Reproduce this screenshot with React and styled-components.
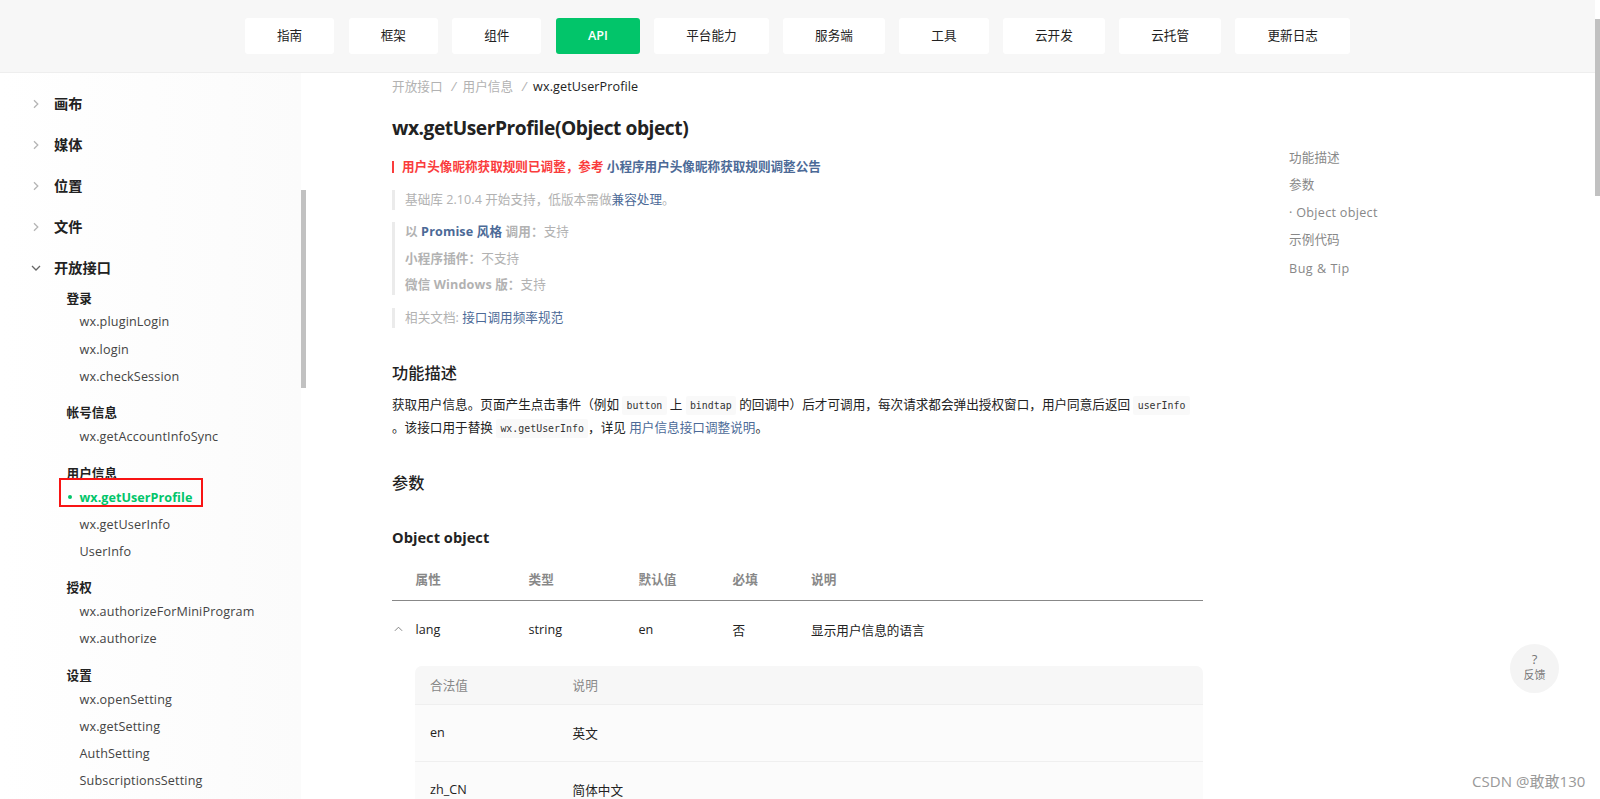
import React from "react";
import styled, { createGlobalStyle, css } from "styled-components";

const tabs = [
  "指南",
  "框架",
  "组件",
  "API",
  "平台能力",
  "服务端",
  "工具",
  "云开发",
  "云托管",
  "更新日志",
];

const closedSections = ["画布", "媒体", "位置", "文件"];

const groups = [
  { title: "登录", items: ["wx.pluginLogin", "wx.login", "wx.checkSession"] },
  { title: "帐号信息", items: ["wx.getAccountInfoSync"] },
  {
    title: "用户信息",
    items: ["wx.getUserProfile", "wx.getUserInfo", "UserInfo"],
  },
  { title: "授权", items: ["wx.authorizeForMiniProgram", "wx.authorize"] },
  {
    title: "设置",
    items: [
      "wx.openSetting",
      "wx.getSetting",
      "AuthSetting",
      "SubscriptionsSetting",
    ],
  },
];

const toc = ["功能描述", "参数", "· Object object", "示例代码", "Bug & Tip"];

const Chevron = ({ open }) => (
  <Arrow viewBox="0 0 10 10" $open={open}>
    <path d={open ? "M1 3 L5 7 L9 3" : "M3 1.2 L6.8 5 L3 8.8"} />
  </Arrow>
);

const Header = () => (
  <Bar>
    {tabs.map((tab) => (
      <Tab key={tab} $active={tab === "API"}>
        {tab}
      </Tab>
    ))}
  </Bar>
);

const Sidebar = () => (
  <Side>
    <Menu>
      {closedSections.map((name) => (
        <Section key={name}>
          <Chevron />
          <span>{name}</span>
        </Section>
      ))}
      <Section>
        <Chevron open />
        <span>开放接口</span>
      </Section>
      {groups.map(({ title, items }) => (
        <Group key={title}>
          <GroupTitle>{title}</GroupTitle>
          {items.map((item) => (
            <Item key={item} $active={item === "wx.getUserProfile"}>
              {item}
              {item === "wx.getUserProfile" && <Marker />}
            </Item>
          ))}
        </Group>
      ))}
    </Menu>
    <SideTrack>
      <SideThumb />
    </SideTrack>
  </Side>
);

const Params = () => (
  <Table>
    <TableRow $head>
      <span />
      <span>属性</span>
      <span>类型</span>
      <span>默认值</span>
      <span>必填</span>
      <span>说明</span>
    </TableRow>
    <TableRow>
      <Toggle viewBox="0 0 10 8">
        <path d="M1 6 L5 2 L9 6" />
      </Toggle>
      <span>lang</span>
      <span>string</span>
      <span>en</span>
      <span>否</span>
      <span>显示用户信息的语言</span>
    </TableRow>
    <SubTable>
      <SubRow $head>
        <span>合法值</span>
        <span>说明</span>
      </SubRow>
      <SubRow>
        <span>en</span>
        <span>英文</span>
      </SubRow>
      <SubRow>
        <span>zh_CN</span>
        <span>简体中文</span>
      </SubRow>
    </SubTable>
  </Table>
);

export default function App() {
  return (
    <Page>
      <GlobalStyle />
      <Layout>
        <Header />
        <Body>
          <Sidebar />
          <Content>
            <Crumbs>
              <span>开放接口</span>
              <i>/</i>
              <span>用户信息</span>
              <i>/</i>
              <b>wx.getUserProfile</b>
            </Crumbs>
            <Title>wx.getUserProfile(Object object)</Title>
            <Alert>
              用户头像昵称获取规则已调整，参考{" "}
              <Link>小程序用户头像昵称获取规则调整公告</Link>
            </Alert>
            <Quote>
              <p>
                基础库 2.10.4 开始支持，低版本需做<Link>兼容处理</Link>。
              </p>
            </Quote>
            <Quote $list>
              <p>
                <strong>
                  以 <Link>Promise 风格</Link> 调用：
                </strong>
                支持
              </p>
              <p>
                <strong>小程序插件：</strong>不支持
              </p>
              <p>
                <strong>微信 Windows 版：</strong>支持
              </p>
            </Quote>
            <Quote>
              <p>
                相关文档: <Link>接口调用频率规范</Link>
              </p>
            </Quote>
            <Heading>功能描述</Heading>
            <Text>
              获取用户信息。页面产生点击事件（例如 <Code>button</Code> 上{" "}
              <Code>bindtap</Code>{" "}
              的回调中）后才可调用，每次请求都会弹出授权窗口，用户同意后返回{" "}
              <Code>userInfo</Code>
              <br />
              。该接口用于替换 <Code>wx.getUserInfo</Code>，详见{" "}
              <Link>用户信息接口调整说明</Link>。
            </Text>
            <Heading $params>参数</Heading>
            <SubHeading>Object object</SubHeading>
            <Params />
          </Content>
          <Toc>
            {toc.map((name) => (
              <li key={name}>{name}</li>
            ))}
          </Toc>
        </Body>
      </Layout>
      <PageTrack>
        <PageThumb />
      </PageTrack>
      <Feedback>
        <b>?</b>
        <span>反馈</span>
      </Feedback>
      <Watermark>CSDN @敢敢130</Watermark>
    </Page>
  );
}

const GlobalStyle = createGlobalStyle`
  * {
    box-sizing: border-box;
    margin: 0;
    padding: 0;
  }
  body {
    background: #fff;
    color: #222;
    font-family: "Open Sans", "Noto Sans CJK SC", sans-serif;
    font-size: 12.6px;
    letter-spacing: 0.04px;
    overflow: hidden;
  }
`;

const Page = styled.div`
  position: relative;
  display: flex;
  width: 1600px;
  height: 799px;
  overflow: hidden;
`;

const Layout = styled.div`
  flex: 1;
  display: flex;
  flex-direction: column;
  min-width: 0;
`;

const Bar = styled.header`
  flex: none;
  height: 73px;
  padding: 18px 0 0 245px;
  display: flex;
  gap: 14.4px;
  background: #f7f7f7;
  border-bottom: 1px solid #eee;
`;

const Tab = styled.a`
  height: 36px;
  padding: 0 32px;
  line-height: 36px;
  border-radius: 3px;
  background: #fff;
  white-space: nowrap;
  letter-spacing: 0.02px;
  ${(props) =>
    props.$active &&
    css`
      background: #02c56a;
      color: #fff;
      font-weight: 600;
    `}
`;

const Body = styled.div`
  flex: 1;
  display: flex;
  min-height: 0;
`;

const Side = styled.aside`
  flex: none;
  width: 306px;
  display: flex;
`;

const Menu = styled.nav`
  width: 301px;
  padding-top: 10.5px;
  overflow: hidden;
  background: linear-gradient(to right, #fff, #fbfbfb);
`;

const SideTrack = styled.div`
  width: 5px;
  padding-top: 117px;
`;

const SideThumb = styled.div`
  height: 198px;
  background: #c1c1c1;
`;

const Section = styled.div`
  height: 41px;
  padding-left: 31px;
  display: flex;
  align-items: center;
  gap: 13px;
  font-size: 14.2px;
  font-weight: 600;
  span {
    padding-bottom: 2px;
  }
`;

const Arrow = styled.svg`
  width: 10px;
  height: 10px;
  fill: none;
  stroke: ${(props) => (props.$open ? "#666" : "#b5b5b5")};
  stroke-width: 1.3;
`;

const Group = styled.div`
  margin-bottom: 13.3px;
`;

const GroupTitle = styled.div`
  height: 19.9px;
  padding-left: 66.5px;
  line-height: 19px;
  font-weight: 600;
`;

const Item = styled.div`
  position: relative;
  height: 27.2px;
  padding-left: 79.5px;
  line-height: 28.6px;
  color: #444;
  letter-spacing: 0.15px;
  ${(props) =>
    props.$active &&
    css`
      color: #02c56a;
      font-weight: 700;
      letter-spacing: 0.05px;
      &::before {
        content: "";
        position: absolute;
        left: 68px;
        top: 11.5px;
        width: 4px;
        height: 4px;
        border-radius: 50%;
        background: #02c56a;
      }
    `}
`;

const Marker = styled.div`
  position: absolute;
  left: 58.6px;
  top: -5.5px;
  width: 144px;
  height: 29px;
  border: 2px solid #f81414;
`;

const Content = styled.main`
  width: 811px;
  margin-left: 86px;
  flex: none;
`;

const Crumbs = styled.div`
  height: 27px;
  line-height: 27px;
  display: flex;
  color: #b2b2b2;
  i {
    width: 20px;
    padding-left: 9px;
    font-size: 13px;
  }
  b {
    color: #222;
    font-weight: 400;
    letter-spacing: 0.1px;
  }
`;

const Title = styled.h1`
  height: 55px;
  line-height: 55px;
  font-size: 19.2px;
  font-weight: 700;
  letter-spacing: -0.46px;
`;

const Link = styled.a`
  color: #4c6a97;
`;

const Alert = styled.p`
  height: 12px;
  margin: 6px 0 17px;
  padding-left: 8px;
  border-left: 2px solid #fa3c3c;
  line-height: 12px;
  color: #fa3c3c;
  font-weight: 600;
  letter-spacing: 0;
  white-space: nowrap;
`;

const Quote = styled.blockquote`
  margin-bottom: 12px;
  padding-left: 10px;
  border-left: 3px solid #ebebeb;
  color: #b2b2b2;
  line-height: 20px;
  ${(props) =>
    props.$list &&
    css`
      margin-bottom: 13px;
      p + p {
        margin-top: 6.5px;
      }
    `}
  strong {
    font-weight: 700;
    letter-spacing: 0.12px;
  }
`;

const Heading = styled.h2`
  margin-top: ${(props) => (props.$params ? "31px" : "33px")};
  height: 24px;
  line-height: 24px;
  font-size: 16.2px;
  font-weight: 500;
`;

const Text = styled.p`
  margin-top: 9px;
  line-height: 22px;
  letter-spacing: 0.02px;
  white-space: nowrap;
`;

const Code = styled.code`
  padding: 4px 4.2px;
  border-radius: 2px;
  background: #f9f9f9;
  color: #333;
  font-family: "DejaVu Sans Mono", monospace;
  font-size: 9.9px;
`;

const SubHeading = styled.h3`
  margin-top: 32px;
  height: 20px;
  line-height: 20px;
  font-size: 14.6px;
  font-weight: 700;
`;

const Table = styled.div`
  margin-top: 11px;
`;

const TableRow = styled.div`
  display: grid;
  grid-template-columns: 23.5px 113px 110px 94px 78.5px 1fr;
  align-items: center;
  height: ${(props) => (props.$head ? "43px" : "56px")};
  ${(props) =>
    props.$head &&
    css`
      padding-bottom: 2px;
      color: #888;
      font-weight: 600;
      border-bottom: 1px solid #888;
    `}
`;

const Toggle = styled.svg`
  width: 9px;
  height: 8px;
  margin-left: 2px;
  fill: none;
  stroke: #777;
`;

const SubTable = styled.div`
  margin: 9px 0 0 23px;
  border-radius: 7px 7px 0 0;
  overflow: hidden;
  background: #fbfbfb;
`;

const SubRow = styled.div`
  display: grid;
  grid-template-columns: 142.5px 1fr;
  align-items: center;
  height: ${(props) => (props.$head ? "39px" : "57px")};
  padding: 0 0 1px 15px;
  border-bottom: 1px solid #efefef;
  ${(props) =>
    props.$head &&
    css`
      background: #f7f7f7;
      color: #888;
    `}
`;

const Toc = styled.ul`
  margin: 70.5px 0 0 86px;
  list-style: none;
  color: #888;
  letter-spacing: 0.1px;
  li {
    height: 27.5px;
    line-height: 28px;
  }
  li:nth-child(3),
  li:last-child {
    letter-spacing: 0.3px;
  }
  li:last-child {
    margin-top: 1px;
    letter-spacing: 0.5px;
  }
`;

const PageTrack = styled.div`
  flex: none;
  width: 5px;
  padding-top: 19px;
  background: #fff;
`;

const PageThumb = styled.div`
  height: 177px;
  background: #c1c1c1;
`;

const Feedback = styled.div`
  position: absolute;
  left: 1510px;
  top: 644px;
  width: 49px;
  height: 49px;
  padding-top: 8px;
  display: flex;
  flex-direction: column;
  align-items: center;
  border-radius: 50%;
  background: #f4f4f4;
  color: #777;
  font-size: 11px;
  line-height: 15px;
  b {
    font-size: 13px;
    font-weight: 400;
  }
`;

const Watermark = styled.div`
  position: absolute;
  left: 1472px;
  top: 770px;
  font-size: 15px;
  line-height: 22px;
  color: #999;
  white-space: nowrap;
`;
